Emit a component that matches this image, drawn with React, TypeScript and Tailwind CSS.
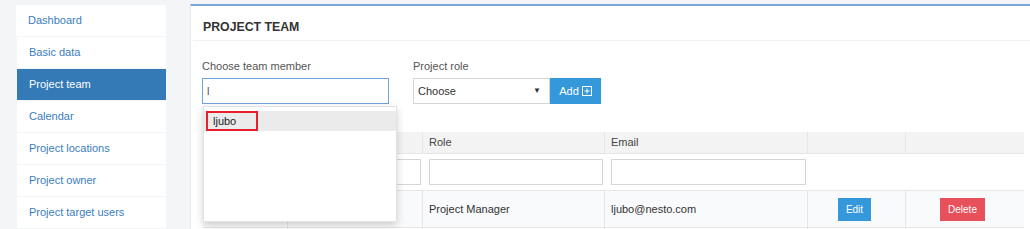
import React from "react";

const menu = [
  "Dashboard",
  "Basic data",
  "Project team",
  "Calendar",
  "Project locations",
  "Project owner",
  "Project target users",
];

const cols = "grid grid-cols-[85px_135px_182px_203px_98px_118px]";

function SquarePlus() {
  return (
    <svg width="10" height="10" viewBox="0 0 10 10" className="ml-[3px]">
      <rect x="0.5" y="0.5" width="9" height="9" fill="none" stroke="white" strokeWidth="1" />
      <path d="M5 2.5v5M2.5 5h5" stroke="white" strokeWidth="1" />
    </svg>
  );
}

export default function App() {
  return (
    <div className="flex h-[229px] w-[1030px] overflow-hidden bg-[#f4f5f7] font-['Liberation_Sans',Arial,sans-serif] text-[11px] text-[#333]">
      {/* sidebar */}
      <aside className="mt-[5px] flex w-[166px] flex-col gap-[1px]">
        {menu.map((item) => (
          <div
            key={item}
            className={
              item === "Project team"
                ? "ml-[17px] flex h-[31px] items-center bg-[#337ab7] pl-[12px] text-white"
                : item === "Dashboard"
                  ? "ml-[16px] flex h-[31px] items-center bg-white pl-[12px] text-[#3a7cc2]"
                  : "ml-[17px] flex h-[31px] items-center bg-white pl-[12px] text-[#3a7cc2]"
            }
          >
            {item}
          </div>
        ))}
      </aside>

      {/* main panel */}
      <section className="relative ml-[24px] mt-[4px] flex-1 border-t-2 border-l border-t-[#7aa7dc] border-l-[#eaeaea] bg-white">
        <div className="ml-[2px] flex h-[35px] items-center border-b border-[#f0f0f0] pl-[10px] pt-[8px] text-[12.3px] font-bold text-[#333]">
          PROJECT TEAM
        </div>

        <div className="pl-[11px] pr-[6px] pt-[18px]">
          <div className="flex">
            <div className="w-[211px]">
              <div className="h-[14px] leading-[14px] text-[#555]">Choose team member</div>
              <div className="mt-[5px] flex h-[26px] w-[187px] items-center border border-[#6fa3dc] pl-[4px] text-[#555]">
                l
              </div>
            </div>
            <div>
              <div className="h-[14px] leading-[14px] text-[#555]">Project role</div>
              <div className="mt-[5px] flex h-[26px]">
                <div className="flex w-[137px] items-center justify-between border border-[#d5d5d5] pl-[4px] pr-[8px] text-[#333]">
                  <span>Choose</span>
                  <span className="text-[8px] text-[#333]">▼</span>
                </div>
                <div className="flex w-[51px] items-center justify-center bg-[#3498db] text-white">
                  Add
                  <SquarePlus />
                </div>
              </div>
            </div>
          </div>

          {/* table */}
          <div className="ml-[1px] mt-[28px]">
            <div className={`${cols} h-[22px] border-b border-[#e6e6e6] bg-[#f3f3f3] text-[#444]`}>
              <div className="border-r border-[#e6e6e6]" />
              <div className="border-r border-[#e6e6e6]" />
              <div className="flex items-center border-r border-[#e6e6e6] pl-[6px]">Role</div>
              <div className="flex items-center border-r border-[#e6e6e6] pl-[6px]">Email</div>
              <div className="border-r border-[#e6e6e6]" />
              <div />
            </div>
            <div className={`${cols} h-[37px] border-b border-[#e6e6e6] bg-white`}>
              <div className="flex items-center pl-[6px] pr-[2px]">
                <div className="h-[26px] w-full border border-[#d5d5d5]" />
              </div>
              <div className="flex items-center pl-[4px] pr-[2px]">
                <div className="h-[26px] w-full border border-[#d5d5d5]" />
              </div>
              <div className="flex items-center pl-[6px] pr-[2px]">
                <div className="h-[26px] w-full border border-[#d5d5d5]" />
              </div>
              <div className="flex items-center pl-[6px] pr-[2px]">
                <div className="h-[26px] w-full border border-[#d5d5d5]" />
              </div>
              <div />
              <div />
            </div>
            <div className={`${cols} h-[37px] border-b border-[#e6e6e6] bg-[#f9fafc] text-[#333]`}>
              <div className="border-r border-[#e6e6e6]" />
              <div className="border-r border-[#e6e6e6]" />
              <div className="flex items-center border-r border-[#e6e6e6] pl-[6px]">Project Manager</div>
              <div className="flex items-center border-r border-[#e6e6e6] pl-[6px]">ljubo@nesto.com</div>
              <div className="flex items-center justify-center border-r border-[#e6e6e6] pr-[4px]">
                <button className="h-[23px] w-[33px] bg-[#3498db] text-[10px] text-white">Edit</button>
              </div>
              <div className="flex items-center justify-center pr-[5px]">
                <button className="h-[23px] w-[45px] bg-[#e8505b] text-[10px] text-white">Delete</button>
              </div>
            </div>
            <div className={`${cols} h-[10px] bg-white`}>
              <div className="border-r border-[#e6e6e6]" />
              <div className="border-r border-[#e6e6e6]" />
              <div className="border-r border-[#e6e6e6]" />
              <div className="border-r border-[#e6e6e6]" />
              <div className="border-r border-[#e6e6e6]" />
              <div />
            </div>
          </div>
        </div>

        {/* autocomplete dropdown */}
        <div className="absolute left-[12px] top-[100px] h-[116px] w-[194px] border border-[#e2e2e2] bg-white pt-[4px] shadow-[0_3px_8px_rgba(0,0,0,0.18)]">
          <div className="flex h-[20px] items-center bg-[#ebebeb]">
            <div className="ml-[2px] flex h-[20px] w-[52px] items-center border-2 border-[#e5202a] pl-[5px] text-[#222]">
              ljubo
            </div>
          </div>
        </div>
      </section>
    </div>
  );
}
